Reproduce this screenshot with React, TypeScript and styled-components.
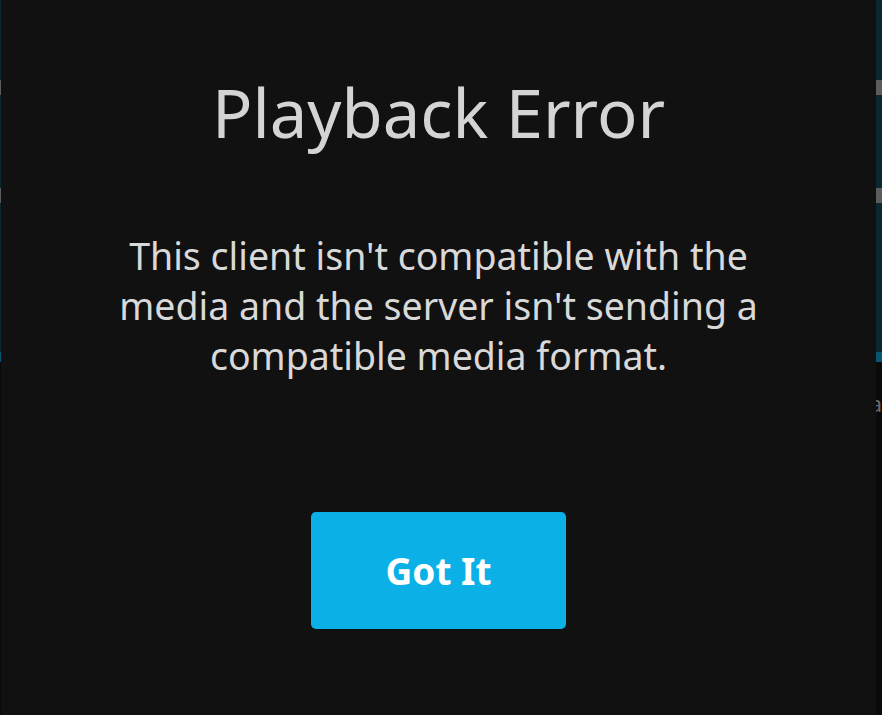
import React from "react";
import styled, {createGlobalStyle} from "styled-components";

const Global = createGlobalStyle`
    html, body {
        margin: 0;
        padding: 0;
        background: #0a0a0a;
        font-family: "Noto Sans", "Open Sans", sans-serif;
        overflow: hidden;
    }
`

const Page = styled.div`
    width: 882px;
    height: 715px;
    display: flex;
    flex-direction: column;
`

const Hero = styled.div`
    height: 362px;
    box-sizing: border-box;
    background: #0d2731;
    border-bottom: 10px solid #0a5473;
    display: flex;
    flex-direction: column;
    padding: 80px 0 0;
    .row{
        display:flex;
        justify-content:space-between;
    }
`

const Bar = styled.div<{top?: number}>`
    width: 8px;
    height: 15px;
    background: #5c5c5c;
    margin-top: ${p => p.top || 0}px;
`

const Below = styled.div`
    flex-grow: 1;
    color: #6a6a6a;
    font-size: 22px;
    text-align: right;
    padding-top: 26px;
`

const Overlay = styled.div`
    position: fixed;
    inset: 0;
    display: flex;
    justify-content: flex-start;
    padding-left: 1px;
`

const Dialog = styled.div`
    width: 875px;
    height: 715px;
    background: #111111;
    display: flex;
    flex-direction: column;
    align-items: center;
    box-sizing: border-box;
    padding-top: 73px;
`

const Title = styled.h1`
    margin: 0;
    font-size: 67px;
    line-height: 79px;
    font-weight: 400;
    color: #d4d4d4;
`

const Message = styled.p`
    margin: 79px 0 0;
    width: 660px;
    text-align: center;
    font-size: 37.5px;
    line-height: 50px;
    color: #d9d9d9;
`

const Button = styled.button`
    margin-top: 131px;
    width: 255px;
    height: 117px;
    border: none;
    border-radius: 5px;
    background: #0bb0e7;
    color: #ffffff;
    font-family: "Noto Sans", "Open Sans", sans-serif;
    font-size: 37px;
    font-weight: 700;
    cursor: pointer;
`

export default function App() {
    return (
        <>
            <Global/>
            <Page>
                <Hero>
                    <div className="row">
                        <Bar/>
                        <Bar/>
                    </div>
                    <div className="row">
                        <Bar top={93}/>
                        <Bar top={93}/>
                    </div>
                </Hero>
                <Below>a</Below>
            </Page>
            <Overlay>
                <Dialog>
                    <Title>Playback Error</Title>
                    <Message>This client isn't compatible with the media and the server isn't sending a compatible media format.</Message>
                    <Button>Got It</Button>
                </Dialog>
            </Overlay>
        </>
    )
}
